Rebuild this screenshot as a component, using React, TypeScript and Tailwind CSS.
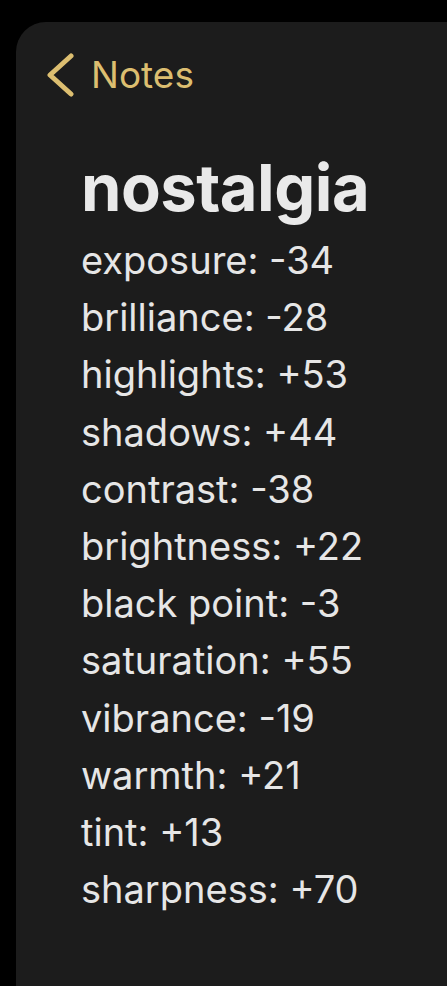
import React from "react";

const lines = [
  "exposure: -34",
  "brilliance: -28",
  "highlights: +53",
  "shadows: +44",
  "contrast: -38",
  "brightness: +22",
  "black point: -3",
  "saturation: +55",
  "vibrance: -19",
  "warmth: +21",
  "tint: +13",
  "sharpness: +70",
];

export default function App() {
  return (
    <div
      className="flex h-[986px] w-[447px] flex-col overflow-hidden bg-black pl-[16px] pt-[22px]"
      style={{ fontFamily: "Inter, 'Noto Sans', sans-serif" }}
    >
      <div className="flex-1 rounded-tl-[30px] bg-[#1c1c1c]">
        <div className="flex h-[40px] items-center pl-[29px] mt-[33px]">
          <svg width="30" height="44" viewBox="0 0 30 44" className="mr-[16px]">
            <path
              d="M26 3 L5 22 L26 41"
              fill="none"
              stroke="#dcbe70"
              strokeWidth="5"
              strokeLinecap="round"
              strokeLinejoin="round"
            />
          </svg>
          <span className="text-[37px] leading-[40px] text-[#dcbe70]">Notes</span>
        </div>
        <div className="pl-[65px] pt-[61px]">
          <div className="text-[65px] font-bold leading-[64px] tracking-[-0.5px] text-[#e9e9e9]">
            nostalgia
          </div>
          <div className="mt-[12px] flex flex-col">
            {lines.map((l) => (
              <div key={l} className="text-[38px] leading-[57.2px] text-[#e6e6e6]">
                {l}
              </div>
            ))}
          </div>
        </div>
      </div>
    </div>
  );
}
